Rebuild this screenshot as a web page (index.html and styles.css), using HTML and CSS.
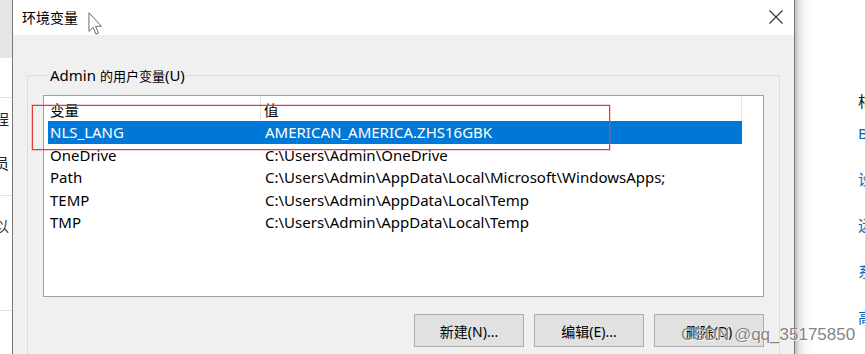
FILE: index.html
```html
<!DOCTYPE html>
<html lang="zh-CN">
<head>
<meta charset="utf-8">
<title>环境变量</title>
<link rel="stylesheet" href="styles.css">
</head>
<body>
<div class="desk">
  <div class="bg-left">
    <div class="bl-top"></div>
    <div class="bl-cell bl-a"></div>
    <div class="bl-cell bl-b"><div class="bl-ch">程</div><div class="bl-ch bl-second">员</div></div>
    <div class="bl-cell bl-c"><div class="bl-ch bl-grey">以</div></div>
    <div class="bl-cell bl-d"></div>
  </div>

  <div class="dialog">
    <div class="titlebar">
      <span class="title">环境变量</span>
      <svg class="close" width="14" height="14" viewBox="0 0 14 14"><path d="M0.5 0.5 L13.5 13.5 M13.5 0.5 L0.5 13.5" stroke="#333" stroke-width="1.1" fill="none"/></svg>
    </div>
    <div class="dlg-body">
      <fieldset class="group">
        <legend class="group-label">Admin <span class="cjk-sm">的用户变量</span>(U)</legend>
        <div class="list">
          <div class="lv-head">
            <div class="hc hc1">变量</div>
            <div class="hc hc2">值</div>
          </div>
          <div class="lv-row sel"><div class="c1">NLS_LANG</div><div class="c2">AMERICAN_AMERICA.ZHS16GBK</div></div>
          <div class="lv-row"><div class="c1">OneDrive</div><div class="c2">C:\Users\Admin\OneDrive</div></div>
          <div class="lv-row"><div class="c1">Path</div><div class="c2">C:\Users\Admin\AppData\Local\Microsoft\WindowsApps;</div></div>
          <div class="lv-row"><div class="c1">TEMP</div><div class="c2">C:\Users\Admin\AppData\Local\Temp</div></div>
          <div class="lv-row"><div class="c1">TMP</div><div class="c2">C:\Users\Admin\AppData\Local\Temp</div></div>
        </div>
        <div class="btns">
          <button class="btn">新建(N)...</button>
          <button class="btn">编辑(E)...</button>
          <button class="btn">删除(D)</button>
        </div>
      </fieldset>
    </div>
  </div>

  <div class="bg-right">
    <div class="rel-head">相关设置</div>
    <div class="rel-link first">BitLocker 设置</div>
    <div class="rel-link">设备管理器</div>
    <div class="rel-link">远程桌面</div>
    <div class="rel-link">系统保护</div>
    <div class="rel-link">高级系统设置</div>
  </div>

  <div class="annot"></div>
  <svg class="cursor" width="15" height="23" viewBox="0 0 12 19"><path d="M0.6 0.6 V16 L4 12.6 L6.4 18.3 L8.5 17.4 L6.1 11.8 H10.9 Z" fill="#fff" stroke="#666" stroke-width="0.8" stroke-linejoin="round"/></svg>
  <div class="watermark">CSDN @qq_35175850</div>
</div>
</body>
</html>
```

FILE: styles.css
```css
* { box-sizing: border-box; }
html, body { margin: 0; padding: 0; }
body {
  width: 865px;
  height: 354px;
  overflow: hidden;
  background: #fff;
  font-family: "Noto Sans", "Noto Sans CJK SC", sans-serif;
  color: #000;
}
.desk {
  position: relative;
  display: flex;
  width: 865px;
  height: 354px;
  overflow: hidden;
}

/* background window at left */
.bg-left {
  width: 12px;
  flex: none;
  background: #fff;
  overflow: hidden;
  display: flex;
  flex-direction: column;
}
.bl-top { height: 58px; background: #e6e6e6; flex: none; }
.bl-cell { flex: none; }
.bl-a { height: 39px; }
.bl-b { height: 98px; border-top: 1px solid #e3e3e3; padding-top: 11px; }
.bl-c { height: 115px; border-top: 1px solid #e3e3e3; padding-top: 20px; }
.bl-d { height: 44px; border-top: 1px solid #e3e3e3; }
.bl-ch {
  font-family: "Noto Sans CJK SC", sans-serif;
  font-size: 15px;
  line-height: 20px;
  margin-left: -6px;
  color: #222;
  white-space: nowrap;
}
.bl-second { margin-top: 24px; }
.bl-grey { color: #444; }

/* dialog */
.dialog {
  width: 783px;
  flex: none;
  border-left: 1px solid #7a7a7a;
  border-right: 1px solid #7a7a7a;
  background: #f0f0f0;
  display: flex;
  flex-direction: column;
}
.titlebar {
  height: 35px;
  flex: none;
  background: #fff;
  display: flex;
  align-items: center;
  justify-content: space-between;
  padding: 0 11px 1px 9px;
}
.title {
  font-family: "Noto Sans CJK SC", sans-serif;
  font-size: 14px;
  line-height: 20px;
}
.close { display: block; margin-top: -1px; }

.dlg-body {
  flex: 1;
  padding: 30px 14px 0 14px;
}
.group {
  margin: 0;
  border: 1px solid #dcdcdc;
  padding: 10px 15px 0 15px;
  min-width: 0;
  height: 320px;
}
.group-label {
  font-size: 15px;
  line-height: 20px;
  height: 20px;
  padding: 0 2px;
  margin-left: 5px;
  white-space: nowrap;
}
.cjk-sm {
  font-family: "Noto Sans CJK SC", sans-serif;
  font-size: 13px;
  line-height: 1;
}

.list {
  height: 202px;
  border: 1px solid #a0a0a0;
  background: #fff;
  padding: 0 21px 0 4px;
}
.lv-head {
  display: grid;
  grid-template-columns: 213px 1fr;
  height: 25px;
}
.hc {
  line-height: 22px;
  padding-top: 3px;
  height: 25px;
  border-right: 1px solid #e5e5e5;
  font-family: "Noto Sans CJK SC", sans-serif;
  font-size: 14.5px;
}
.hc1 { padding-left: 2px; }
.hc2 { padding-left: 3px; }
.lv-row {
  display: grid;
  grid-template-columns: 214px 1fr;
  height: 22.5px;
  line-height: 22px;
  font-size: 15px;
  white-space: nowrap;
}
.lv-row .c1 { padding-left: 2px; }
.lv-row .c2 { padding-left: 3px; }
.lv-row.sel { background: #0078d7; color: #fff; }

.btns {
  display: flex;
  justify-content: flex-end;
  gap: 10px;
  margin-top: 17px;
}
.btn {
  width: 110px;
  height: 33px;
  background: #e1e1e1;
  border: 1px solid #adadad;
  border-radius: 0;
  font-family: "Noto Sans", "Noto Sans CJK SC", sans-serif;
  font-size: 14px;
  color: #000;
  padding: 0;
}

/* background window at right */
.bg-right {
  flex: 1;
  background: linear-gradient(to right, #bdbdbd 0, #e4e4e4 4px, #f7f7f7 10px, #fff 18px);
  padding: 91px 0 0 63px;
  white-space: nowrap;
  overflow: hidden;
  font-family: "Noto Sans CJK SC", sans-serif;
  font-size: 15px;
  line-height: 20px;
}
.rel-head { color: #111; }
.rel-link { color: #0067c0; margin-top: 26px; }
.rel-link.first { margin-top: 12px; font-family: "Noto Sans", "Noto Sans CJK SC", sans-serif; }

/* overlays */
.annot {
  position: absolute;
  left: 32px;
  top: 105px;
  width: 578px;
  height: 45px;
  border: 1px solid #e8383d;
  box-shadow: 0 0 0 0.6px rgba(240, 90, 90, 0.5);
}
.cursor {
  position: absolute;
  left: 88px;
  top: 12px;
}
.watermark {
  position: absolute;
  left: 681px;
  top: 324px;
  font-family: "Liberation Sans", Arial, sans-serif;
  font-size: 17px;
  line-height: 22px;
  color: rgba(115, 115, 115, 0.9);
  text-shadow: 0 0 1px #fff, 1px 1px 0 rgba(255,255,255,0.7);
  white-space: nowrap;
}
```
